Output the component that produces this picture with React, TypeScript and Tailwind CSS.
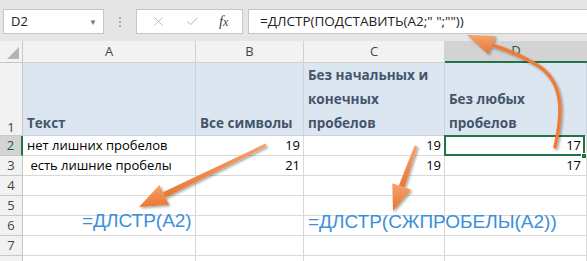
import { X, Check } from "lucide-react";

const rows = [
  { n: "2", a: "нет лишних пробелов", b: "19", c: "19", d: "17" },
  { n: "3", a: " есть лишние пробелы", b: "21", c: "19", d: "17" },
  { n: "4" },
  { n: "5" },
  { n: "6" },
  { n: "7" },
  { n: "" },
];

const cell = "border-r border-b border-[#d9d9d9]";
const rowHead =
  "flex items-center justify-center border-r border-b border-[#c8c8c8] bg-[#f2f2f2] text-[13px] text-[#444]";

function Arrows() {
  return (
    <svg
      className="pointer-events-none absolute left-0 top-0"
      width="587"
      height="261"
      viewBox="0 0 587 261"
    >
      <defs>
        <filter id="sh" x="-20%" y="-20%" width="140%" height="140%">
          <feDropShadow dx="1.5" dy="1.5" stdDeviation="1.2" floodColor="#000" floodOpacity="0.35" />
        </filter>
        <linearGradient id="og" x1="0" y1="0" x2="0" y2="1">
          <stop offset="0" stopColor="#f4a36c" />
          <stop offset="1" stopColor="#ea7633" />
        </linearGradient>
      </defs>
      <g filter="url(#sh)" fill="url(#og)">
        {/* arrow to A */}
        <polygon points="266.6,146.4 265.4,143.6 162.9,192.2 165.5,197.6" />
        <polygon points="139,207 159.4,185 169,204.8" />
        {/* arrow to C */}
        <polygon points="417.4,146.5 414.6,145.5 398.9,185.5 404.5,187.5" />
        <polygon points="393,211 392.3,183.2 411.1,189.8" />
        {/* curved arrow up to formula */}
        <path
          d="M555 147 C563 112, 564 82, 537 65 C522 56, 508 50, 492 45"
          fill="none"
          stroke="#ee7d3a"
          strokeWidth="3.5"
          strokeLinecap="round"
        />
        <polygon points="467,35 496,36 488,54" />
      </g>
    </svg>
  );
}

export default function App() {
  return (
    <div
      className="relative h-[261px] w-[587px] overflow-hidden bg-white"
      style={{ fontFamily: '"Open Sans", sans-serif' }}
    >
      {/* formula bar */}
      <div className="flex h-[41px] items-start bg-[#e6e6e6] pt-[9px] pl-[3px]">
        <div className="flex h-[25px] w-[101px] items-center justify-between border border-[#c6c6c6] bg-white pl-[7px] pr-[6px] text-[13px] text-[#222]">
          <span>D2</span>
          <span className="text-[8px] text-[#777]">▼</span>
        </div>
        <div className="flex h-[25px] w-[32px] flex-col items-center justify-center gap-[2px]">
          <span className="h-[2px] w-[2px] bg-[#aaa]" />
          <span className="h-[2px] w-[2px] bg-[#aaa]" />
          <span className="h-[2px] w-[2px] bg-[#aaa]" />
        </div>
        <div className="flex h-[25px] w-[107px] items-center justify-around border border-[#c6c6c6] bg-white px-[4px]">
          <X size={15} strokeWidth={1.4} color="#b5b5b5" />
          <Check size={15} strokeWidth={1.6} color="#b5b5b5" />
          <span
            className="text-[15px] italic text-[#444]"
            style={{ fontFamily: '"Liberation Serif", serif' }}
          >
            f<span className="text-[12px]">x</span>
          </span>
        </div>
        <div className="ml-[5px] flex h-[25px] flex-1 items-center border border-r-0 border-[#c6c6c6] bg-white pl-[11px] text-[13.5px] text-[#222]">
          =ДЛСТР(ПОДСТАВИТЬ(A2;" ";""))
        </div>
      </div>

      {/* grid */}
      <div className="grid grid-cols-[23px_173px_108px_141px_142px] grid-rows-[22px_73px_repeat(7,20px)]">
        <div className="relative border-r border-b border-[#c8c8c8] bg-[#f2f2f2]">
          <div className="absolute right-[3px] bottom-[3px] h-0 w-0 border-l-[12px] border-b-[12px] border-l-transparent border-b-[#b4b4b4]" />
        </div>
        {["A", "B", "C"].map((l) => (
          <div
            key={l}
            className="flex items-center justify-center border-r border-b border-[#d0d0d0] bg-[#f2f2f2] text-[13px] text-[#444]"
          >
            {l}
          </div>
        ))}
        <div className="flex items-center justify-center border-b-2 border-[#217346] bg-[#d3d3d3] text-[13px] text-[#1e5b38]">
          D
        </div>

        {/* row 1 */}
        <div className={rowHead}>
          <span className="mt-[58px]">1</span>
        </div>
        {[
          ["Текст"],
          ["Все символы"],
          ["Без начальных и", "конечных", "пробелов"],
          ["Без любых", "пробелов"],
        ].map((lines, i) => (
          <div
            key={i}
            className="flex flex-col justify-end border-r border-b border-[#c9d3df] bg-[#dce6f1] pl-[4px] text-[13.5px] font-bold leading-[24px] whitespace-nowrap text-[#44546a]"
          >
            {lines.map((t) => (
              <span key={t}>{t}</span>
            ))}
          </div>
        ))}

        {rows.map((r, idx) => (
          <div key={idx} className="contents">
            <div
              className={
                r.n === "2"
                  ? "flex items-center justify-center border-r-2 border-b border-r-[#217346] border-b-[#c8c8c8] bg-[#d3d3d3] text-[13px] text-[#1e5b38]"
                  : rowHead
              }
            >
              {r.n}
            </div>
            <div className={`${cell} flex items-center pl-[4px] text-[13px] whitespace-pre text-black`}>
              {r.a}
            </div>
            <div className={`${cell} flex items-center justify-end pr-[3px] text-[13px] text-black`}>
              {r.b}
            </div>
            <div className={`${cell} flex items-center justify-end pr-[3px] text-[13px] text-black`}>
              {r.c}
            </div>
            <div className={`${cell} relative flex items-center justify-end pr-[5px] text-[13px] text-black`}>
              {r.d}
              {r.n === "2" && (
                <>
                  <div className="absolute -top-[1px] -left-[1px] right-[1px] -bottom-[1px] border-2 border-[#217346]" />
                  <div className="absolute right-[-1px] bottom-[-4px] h-[6px] w-[6px] border border-white bg-[#217346]" />
                </>
              )}
            </div>
          </div>
        ))}
      </div>

      {/* annotations */}
      <div
        className="absolute left-[82px] top-[208px] text-[19px] leading-[26px] text-[#3b8fdb]"
        style={{ fontFamily: '"Liberation Sans", sans-serif' }}
      >
        =ДЛСТР(A2)
      </div>
      <div
        className="absolute left-[308px] top-[209px] text-[19px] leading-[26px] text-[#3b8fdb]"
        style={{ fontFamily: '"Liberation Sans", sans-serif' }}
      >
        =ДЛСТР(СЖПРОБЕЛЫ(A2))
      </div>
      <Arrows />
    </div>
  );
}
